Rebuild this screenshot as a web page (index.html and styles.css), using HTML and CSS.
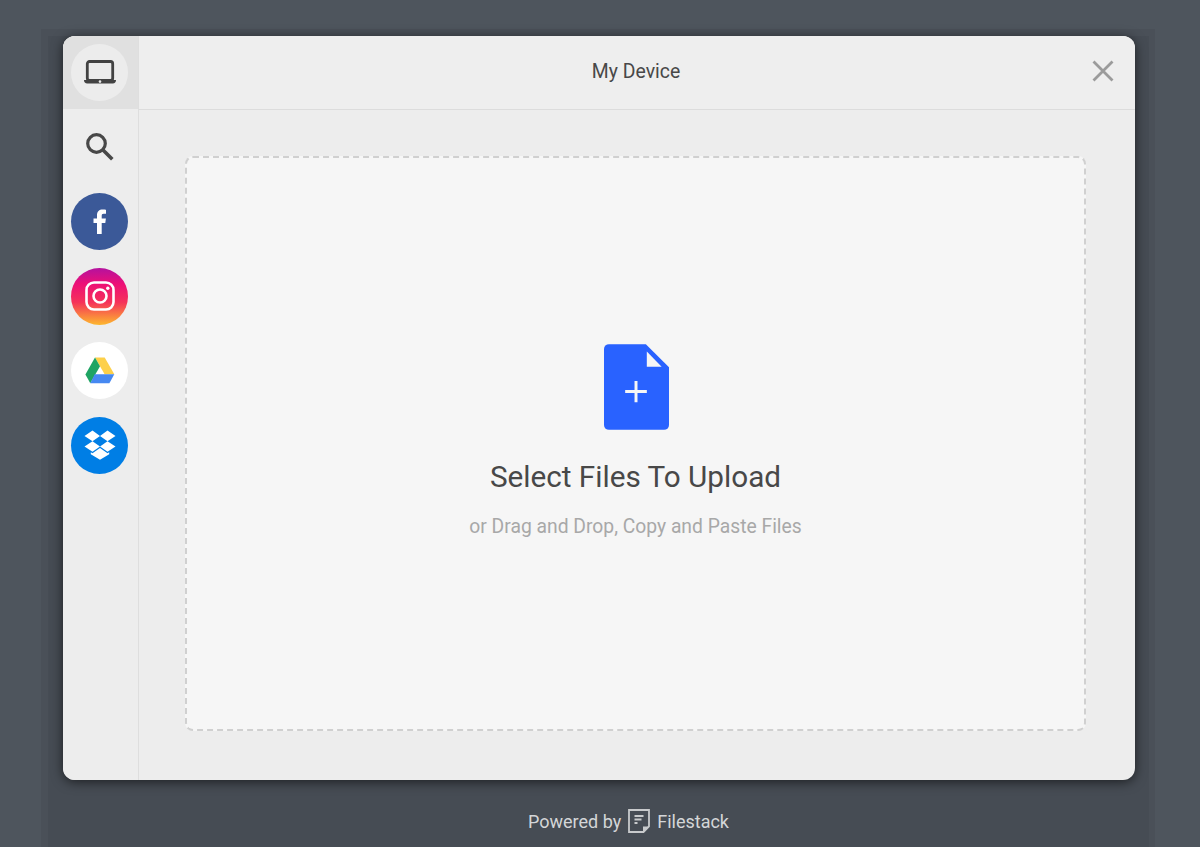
FILE: index.html
```html
<!DOCTYPE html>
<html lang="en">
<head>
<meta charset="utf-8">
<title>Filestack Picker</title>
<link rel="stylesheet" href="styles.css">
</head>
<body>
<div class="halo">
  <div class="stage">
    <main class="modal">
      <nav class="sidebar">
        <div class="source source-active">
          <span class="bubble bubble-light">
            <svg width="32" height="32" viewBox="0 0 32 32"><rect x="3.300" y="4.500" width="25.400" height="19" rx="2.200" fill="none" stroke="#424242" stroke-width="2.800"/><path d="M0 23h32c0 2-1.200 3.600-3.200 3.600H3.200C1.200 26.600 0 25 0 23z" fill="#424242"/><circle cx="16" cy="24.600" r="1.300" fill="#e8e8e8"/></svg>
          </span>
        </div>
        <div class="source source-plain">
          <svg width="32" height="32" viewBox="0 0 32 32"><circle cx="12.500" cy="12.500" r="8.800" fill="none" stroke="#484848" stroke-width="3.200"/><path d="M19 19l9.300 9.300" stroke="#484848" stroke-width="3.600" fill="none"/></svg>
        </div>
        <div class="source">
          <span class="bubble bubble-fb">
            <svg width="14" height="25" viewBox="0 0 14 25"><path d="M4 25V14H.5V9.500H4V6.300C4 2.400 6.300.5 9.600.5c1.500 0 2.900.100 3.400.2v4.100h-2.300C9 4.800 8.700 5.700 8.700 6.900v2.600h4.200l-.6 4.500H8.700v11z" fill="#fff"/></svg>
          </span>
        </div>
        <div class="source">
          <span class="bubble bubble-ig">
            <svg width="30" height="30" viewBox="0 0 30 30"><rect x="1.500" y="1.500" width="27" height="27" rx="7.500" fill="none" stroke="#fff" stroke-width="2.600"/><circle cx="15" cy="15" r="6.500" fill="none" stroke="#fff" stroke-width="2.600"/><circle cx="22.800" cy="7.200" r="1.700" fill="#fff"/></svg>
          </span>
        </div>
        <div class="source">
          <span class="bubble bubble-white">
            <svg width="30" height="27" viewBox="0 0 30 27"><path d="M10 .5h9.700L29.300 17.200H19.600z" fill="#fdd04a"/><path d="M10 .5L.4 17.500l4.900 8.800 9.700-17z" fill="#1fa463"/><path d="M9.700 17.200h19.600l-4.900 9.100H5.300z" fill="#4688f1"/></svg>
          </span>
        </div>
        <div class="source">
          <span class="bubble bubble-db">
            <svg width="32" height="30" viewBox="0 0 32 30"><path d="M8.500 0.500L0.500 6l8 5.200 7.500-5.200zM23.500 0.500L16 6l7.500 5.200 8-5.200zM0.500 16.500l8 5.300 7.500-5.300-7.500-5.300zM23.500 11.200L16 16.500l7.500 5.300 8-5.300z" fill="#fff"/><path d="M8.500 23.300l7.500-5.300 7.500 5.300 1.700-1v2l-9.200 5.500-9.200-5.500v-2z" fill="#fff"/></svg>
          </span>
        </div>
      </nav>
      <section class="panel">
        <header class="panel-head">
          <h1 class="panel-title">My Device</h1>
          <svg class="close" width="24" height="24" viewBox="0 0 24 24"><path d="M2.500 2.500l19 19M21.500 2.500l-19 19" stroke="#9b9b9b" stroke-width="2.800" fill="none"/></svg>
        </header>
        <div class="panel-body">
          <div class="dropzone">
            <svg class="file-icon" width="65" height="86" viewBox="0 0 66 87">
              <path d="M5 0h37.500L66 23.500V82a5 5 0 0 1-5 5H5a5 5 0 0 1-5-5V5a5 5 0 0 1 5-5z" fill="#2962ff"/>
              <path d="M43.500 7.500L58.500 23H43.500z" fill="#f6f6f6"/>
              <path d="M31 37.500h3v9h9.500v3H34v9.500h-3v-9.500h-9.500v-3H31z" fill="#f6f6f6"/>
            </svg>
            <p class="drop-title">Select Files To Upload</p>
            <p class="drop-sub">or Drag and Drop, Copy and Paste Files</p>
          </div>
        </div>
      </section>
    </main>
    <footer class="powered">
      <span>Powered by</span>
      <svg width="22" height="24" viewBox="0 0 22 24"><path d="M1 1h20v16.500L15.500 23H1z" fill="none" stroke="#c8cacc" stroke-width="1.800"/><path d="M6.500 7h9M6.500 10.500h7M6.500 14h3" stroke="#c8cacc" stroke-width="1.800" fill="none"/><path d="M15 23v-5.500h6z" fill="#c8cacc"/></svg>
      <span>Filestack</span>
    </footer>
  </div>
</div>
</body>
</html>
```
FILE: styles.css
```css
* {
  box-sizing: border-box;
}

html,
body {
  margin: 0;
  height: 100%;
  overflow: hidden;
}

body {
  background: #4e555d;
  font-family: Roboto, "Liberation Sans", sans-serif;
  padding: 29px 45px 0 41px;
}

.halo {
  background: #4a5058;
  padding: 7px 6px 0 7px;
  height: 818px;
}

.stage {
  background: #464c54;
  padding: 0 14px 0 15px;
  height: 811px;
}

.modal {
  display: flex;
  width: 1072px;
  height: 744px;
  background: #ededed;
  border-radius: 12px;
  overflow: hidden;
  box-shadow: 0 2px 12px rgba(0, 0, 0, 0.6);
}

.sidebar {
  width: 76px;
  flex: none;
  border-right: 1px solid #dedede;
  display: flex;
  flex-direction: column;
  background: #ededed;
}

.source {
  height: 74.600px;
  padding-right: 2px;
  display: flex;
  align-items: center;
  justify-content: center;
  flex: none;
}

.source-active {
  height: 73px;
  background: #e0e0e0;
}

.source-plain {
  height: 75.200px;
}

.bubble {
  width: 57px;
  height: 57px;
  border-radius: 50%;
  display: flex;
  align-items: center;
  justify-content: center;
}

.bubble-light {
  background: #ececec;
}

.bubble-fb {
  background: #3b5998;
}

.bubble-ig {
  background: linear-gradient(180deg, #b4129f 0%, #ed0f76 28%, #f5325a 60%, #fdb82e 100%);
}

.bubble-white {
  background: #fff;
}

.bubble-db {
  background: #007ee5;
}

.panel {
  flex: 1;
  display: flex;
  flex-direction: column;
  min-width: 0;
}

.panel-head {
  height: 74px;
  flex: none;
  border-bottom: 1px solid #dcdcdc;
  background: #eeeeee;
  padding-right: 2px;
  display: flex;
  align-items: center;
  justify-content: center;
  position: relative;
}

.panel-title {
  margin: 0 0 2px;
  font-size: 19.400px;
  font-weight: 400;
  color: #484848;
}

.close {
  position: absolute;
  right: 20px;
  top: 23px;
}

.panel-body {
  flex: 1;
  padding: 46px 49px 49px 46px;
  display: flex;
}

.dropzone {
  flex: 1;
  background: #f6f6f6;
  border: 2px dashed #d0d0d0;
  border-radius: 8px;
  display: flex;
  flex-direction: column;
  align-items: center;
  padding-top: 186px;
}

.file-icon {
  display: block;
  margin-bottom: 27px;
  margin-left: 1px;
}

.drop-title {
  margin: 0;
  font-size: 29.700px;
  line-height: 40px;
  color: #484848;
}

.drop-sub {
  margin: 18px 0 0;
  font-size: 19.300px;
  line-height: 24px;
  color: #a8a8a8;
}

.powered {
  display: flex;
  justify-content: center;
  align-items: center;
  gap: 7px;
  height: 83px;
  width: 1072px;
  padding-left: 59px;
  padding-bottom: 1px;
  margin-right: -59px;
  font-size: 18px;
  color: #d4d6d8;
}
```
